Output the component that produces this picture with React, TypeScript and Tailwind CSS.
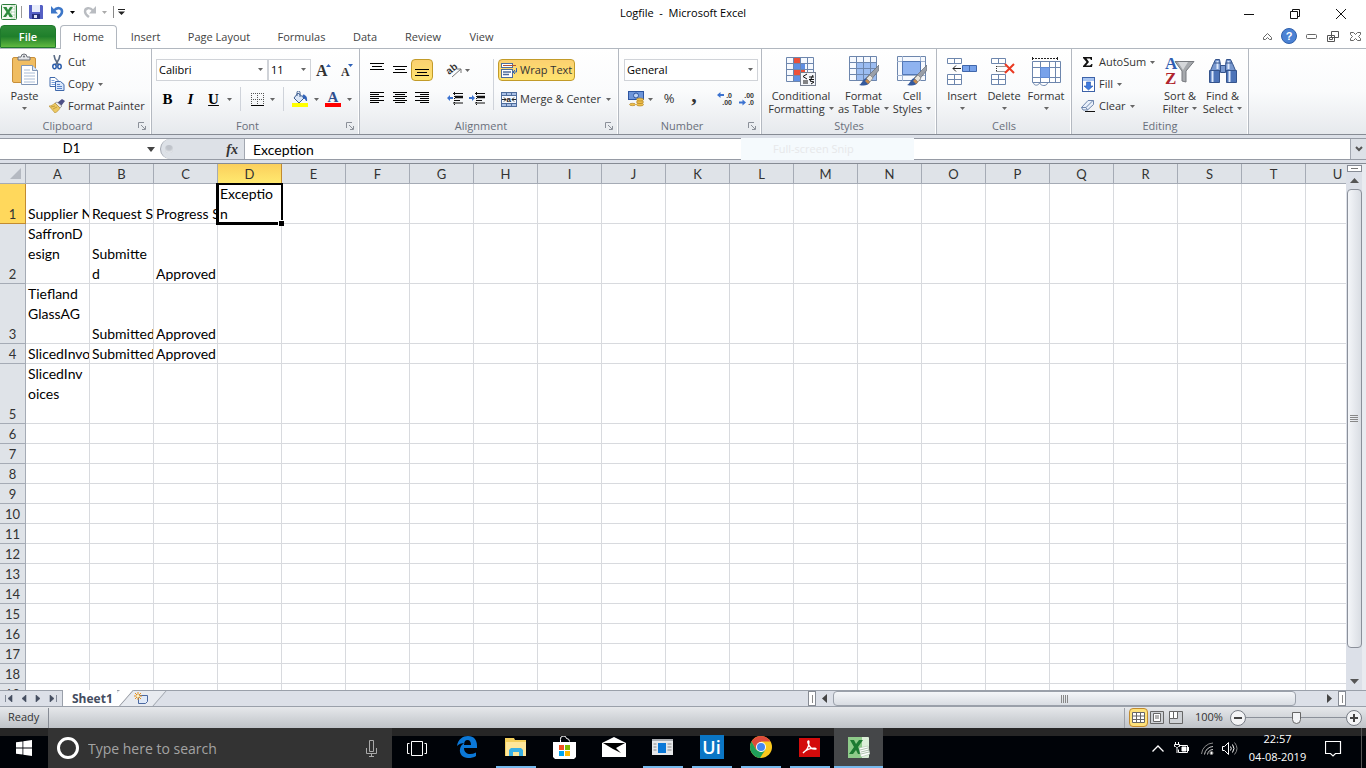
import React, { useState } from 'react';

type IconProps = { className?: string };

const COLUMNS = 'ABCDEFGHIJKLMNOPQRSTU'.split('');

const TABS = [
  { label: 'Insert', width: 'w-[57px]' },
  { label: 'Page Layout', width: 'w-[90px]' },
  { label: 'Formulas', width: 'w-[75px]' },
  { label: 'Data', width: 'w-[52px]' },
  { label: 'Review', width: 'w-[64px]' },
  { label: 'View', width: 'w-[53px]' },
];

// \n marks the places where a wrapped cell breaks
const CELLS: Record<string, string> = {
  A1: 'Supplier N',
  B1: 'Request S',
  C1: 'Progress S',
  D1: 'Exceptio\nn',
  A2: 'SaffronD\nesign\n\u00a0',
  B2: 'Submitte\nd',
  C2: 'Approved',
  A3: 'Tiefland\nGlassAG\n\u00a0',
  B3: 'Submitted',
  C3: 'Approved',
  A4: 'SlicedInvo',
  B4: 'Submitted',
  C4: 'Approved',
  A5: 'SlicedInv\noices\n\u00a0',
};

const rowHeight = (row: number) => {
  switch (row) {
    case 1: return 'h-[39px]';
    case 2:
    case 3:
    case 5: return 'h-[59px]';
    default: return 'h-[19px]';
  }
};

/* ---------- small shared pieces ---------- */

const Arrow = ({ className = 'text-[#666]' }: IconProps) => (
  <svg width="5" height="3" viewBox="0 0 5 3" className={`shrink-0 ${className}`}>
    <path d="M0 0h5L2.5 3z" fill="currentColor" />
  </svg>
);

const Divider = () => <span className="h-6 w-px shrink-0 bg-[#cfd3da]" />;

const Group = ({ title, width, launcher, children }: { title: string; width: string; launcher?: boolean; children: React.ReactNode }) => (
  <section className={`flex shrink-0 flex-col border-r border-[#b4b9c1] shadow-[inset_-1px_0_0_#fff] ${width}`}>
    <div className="flex flex-1">{children}</div>
    <div className="flex h-4 items-center">
      <h2 className="flex-1 text-center text-[11px] leading-4 text-[#696f7b]">{title}</h2>
      {launcher && (
        <button aria-label={`${title} settings`} className="mr-1 flex w-3 justify-end">
          <svg width="9" height="9" viewBox="0 0 9 9" fill="none" stroke="#8b9099">
            <path d="M.5 6V.5H6M3 3l4 4M7.500 4v3.500H4" />
          </svg>
        </button>
      )}
    </div>
  </section>
);

const BigButton = ({ icon, lines, width }: { icon: React.ReactNode; lines: string[]; width: string }) => (
  <button className={`flex shrink-0 flex-col items-center pt-1 text-[11px] leading-[13px] text-[#333] ${width}`}>
    <span className="flex h-9 items-center justify-center">{icon}</span>
    <span>{lines[0]}</span>
    <span className="flex h-[13px] items-center gap-1 whitespace-nowrap">
      {lines[1]}
      <Arrow />
    </span>
  </button>
);

const SmallButton = ({ icon, label, arrow }: { icon: React.ReactNode; label: string; arrow?: boolean }) => (
  <button className="flex h-[22px] items-center gap-[3px] whitespace-nowrap text-[11px] text-[#333]">
    <span className="flex w-4 justify-center">{icon}</span>
    {label}
    {arrow && <Arrow className="ml-px text-[#666]" />}
  </button>
);

const Dropdown = ({ label, value, width }: { label: string; value: string; width: string }) => (
  <div className={`relative flex h-[22px] shrink-0 items-center border border-[#d0d3d8] bg-white ${width}`}>
    <select aria-label={label} defaultValue={value} className="h-4 w-full appearance-none bg-transparent pl-0.5 text-[11px] leading-4 text-black outline-none">
      <option>{value}</option>
    </select>
    <span className="pointer-events-none absolute top-2 right-1"><Arrow /></span>
  </div>
);

/* ---------- icons ---------- */

const ExcelIcon = () => (
  <svg width="16" height="16" viewBox="0 0 16 16">
    <rect x=".5" y=".5" width="15" height="15" rx="1" fill="#f2f8f0" stroke="#2c7d3b" />
    <path d="M10 2h4v12h-4z" fill="#fff" stroke="#8fc08f" strokeWidth=".6" />
    <path d="M10 5h4M10 8h4M10 11h4" stroke="#8fc08f" strokeWidth=".6" />
    <path d="M2 3h3.500L7 6l2-3h3L8.500 8l3.500 5H8.500L7 10l-2 3H2l3.500-5z" fill="#2e8b3d" />
  </svg>
);

const SaveIcon = () => (
  <svg width="14" height="14" viewBox="0 0 14 14">
    <path d="M0 0h13l1 1v13H1l-1-1z" fill="#5560c4" />
    <path d="M3 0h8v7H3z" fill="#e8edfa" />
    <path d="M3 9h8v5H3z" fill="#26307c" />
    <path d="M5 10h3v3H5z" fill="#dfe4f5" />
  </svg>
);

const UndoIcon = () => (
  <svg width="13" height="14" viewBox="0 0 13 14" fill="none">
    <path d="M3 5.500C6 2 11 2.500 11 6.500c0 3-2 4.500-4.500 6" stroke="#3c76c8" strokeWidth="2.600" />
    <path d="M0 1v7.500h7z" fill="#3c76c8" />
  </svg>
);

const RedoIcon = () => (
  <svg width="13" height="14" viewBox="0 0 13 14" fill="none">
    <path d="M10 5.500C7 2 2 2.500 2 6.500c0 3 2 4 4 5.500" stroke="#b9bcc1" strokeWidth="2.400" />
    <path d="M13 1v7.500H6z" fill="#b9bcc1" />
  </svg>
);

const PasteIcon = () => (
  <svg width="28" height="32" viewBox="0 0 28 32">
    <rect x="1.500" y="4.500" width="23" height="25" rx="1.500" fill="#f0bd62" stroke="#c88f3a" />
    <path d="M7 7V4h3a3 3 0 0 1 6 0h3v3z" fill="#e4e6ea" stroke="#6d7178" />
    <circle cx="13" cy="3.500" r="1" fill="#6d7178" />
    <path d="M10.500 12.500h11l5 5v14h-16z" fill="#fff" stroke="#7f95b5" />
    <path d="M21.500 12.500v5h5" fill="#dbe6f5" stroke="#7f95b5" />
    <path d="M13 17h6M13 20h11M13 23h11M13 26h11M13 29h11" stroke="#a9bcd6" />
  </svg>
);

const CutIcon = () => (
  <svg width="10" height="15" viewBox="0 0 10 15" fill="none">
    <path d="M2 0l1 4 3.500 6M8 0L7 4 3.500 10" stroke="#5a6b85" strokeWidth="1.600" />
    <ellipse cx="2.500" cy="11.500" rx="1.700" ry="2.300" stroke="#2a5cab" strokeWidth="1.500" />
    <ellipse cx="7.500" cy="11.500" rx="1.700" ry="2.300" stroke="#2a5cab" strokeWidth="1.500" />
  </svg>
);

const CopyIcon = () => (
  <svg width="16" height="14" viewBox="0 0 16 14" stroke="#3f68ab">
    <path d="M1 .5h5l3 3v6H1z" fill="#fff" />
    <path d="M2.500 3.500h3M2.500 5.500h4M2.500 7.500h4" stroke="#7aa0dc" />
    <path d="M6.500 4.500h5l3.500 3v6H6.500z" fill="#dbe8fb" />
    <path d="M8 7.500h3M8 9.500h5M8 11.500h5" stroke="#5b86cc" />
  </svg>
);

const PainterIcon = () => (
  <svg width="16" height="14" viewBox="0 0 16 14">
    <path d="M13 0l3 2-4 5-4-3z" fill="#4c4f86" />
    <path d="M8 3l5 4-2 2-5-5z" fill="#e9e9ef" stroke="#777" strokeWidth=".6" />
    <path d="M6 4l5 5c-1 2-3 4-5 5L0 7c2 0 4-1 6-3z" fill="#ecc964" stroke="#b68b2c" strokeWidth=".6" />
    <path d="M2 8l4-1M4 10l4-2" stroke="#a77d22" strokeWidth=".6" />
  </svg>
);

const LINE_SETS = {
  top: 'M0 .5h14M2 3.500h10M0 6.500h14',
  middle: 'M0 3.500h14M2 6.500h10M0 9.500h14',
  bottom: 'M0 6.500h14M2 9.500h10M0 12.500h14',
  left: 'M0 .5h14M0 2.500h9M0 4.500h14M0 6.500h9M0 8.500h14M0 10.500h9',
  center: 'M0 .5h14M2 2.500h10M0 4.500h14M2 6.500h10M0 8.500h14M2 10.500h10',
  right: 'M0 .5h14M5 2.500h9M0 4.500h14M5 6.500h9M0 8.500h14M5 10.500h9',
};

const Lines = ({ kind }: { kind: keyof typeof LINE_SETS }) => (
  <svg width="14" height="14" viewBox="0 0 14 14" stroke="#000">
    <path d={LINE_SETS[kind]} />
  </svg>
);

const IndentIcon = ({ out }: { out?: boolean }) => (
  <svg width="16" height="14" viewBox="0 0 16 14" fill="none">
    <path d="M6 1.500h10M8 8.500h5M6 11h10" stroke="#111" />
    <path d="M8 5h8" stroke="#111" strokeWidth="2.500" />
    <path d="M7.500 0v14" stroke="#111" strokeDasharray="1 1" />
    <path d={out ? 'M0 6l3-3v2h3v2H3v2z' : 'M6 6L3 3v2H0v2h3v2z'} fill="#3b72d0" />
  </svg>
);

const OrientationIcon = () => (
  <svg width="16" height="14" viewBox="0 0 16 14" className="overflow-visible">
    <text x="0" y="10" fontSize="10" fontWeight="bold" fontFamily="Liberation Sans, sans-serif" fill="#333" transform="rotate(-38 4 8)">ab</text>
    <path d="M5 14l9-8M14 10V6h-4" fill="none" stroke="#777" />
  </svg>
);

const WrapIcon = () => (
  <svg width="16" height="15" viewBox="0 0 16 15" fill="none">
    <rect x=".5" y=".5" width="11" height="4" fill="#fff" stroke="#4d6c9c" />
    <path d="M2 2.500h13" stroke="#b4532e" />
    <rect x=".5" y="6.500" width="11" height="8" fill="#fff" stroke="#4d6c9c" />
    <path d="M2 9h8M2 11.500h6" stroke="#4d6c9c" strokeWidth="1.400" />
    <path d="M15.500 5v4h-3M14 7l-2 2 2 2" stroke="#2f62b5" />
  </svg>
);

const MergeIcon = () => (
  <svg width="16" height="15" viewBox="0 0 16 15">
    <rect x=".5" y=".5" width="15" height="14" fill="#a9c0e6" stroke="#4d6c9c" />
    <path d="M0 3.500h16M0 11.500h16M5.500 0v3.500M10.500 0v3.500M5.500 11.500V15M10.500 11.500V15" stroke="#4d6c9c" />
    <path d="M1 4h14v7H1z" fill="#f5f9ff" />
    <path d="M1 7.500h4M11 7.500h4M3 5.500l2 2-2 2M13 5.500l-2 2 2 2" fill="none" stroke="#222" />
    <text x="5.500" y="10" fontSize="8" fontWeight="bold" fontFamily="Liberation Sans, sans-serif" fill="#222">a</text>
  </svg>
);

const BorderIcon = () => (
  <svg width="13" height="13" viewBox="0 0 13 13" stroke="#555">
    <path d="M.5 0v12M6.500 0v12M12.500 0v12M0 .5h13M0 6.500h13" strokeDasharray="1 1" />
    <path d="M0 12.500h13" stroke="#000" />
  </svg>
);

const FillColorIcon = () => (
  <svg width="16" height="16" viewBox="0 0 16 16">
    <path d="M6 2l6 5-5 5-5-5z" fill="#dce7f7" stroke="#3f5f90" />
    <path d="M5 5V1.500a1.500 1.500 0 0 1 3 0V6" fill="none" stroke="#3f5f90" />
    <path d="M11 4c3 0 4 3 3.500 6-1-2-2-3-3-3z" fill="#2d60b8" stroke="#2d60b8" />
    <path d="M0 12h16v4H0z" fill="#ff0" />
  </svg>
);

const FontColorIcon = () => (
  <svg width="16" height="16" viewBox="0 0 16 16" className="overflow-visible">
    <text x="8" y="11" textAnchor="middle" fontSize="15" fontWeight="bold" fontFamily="Liberation Serif, serif" fill="#2f4f8f">A</text>
    <path d="M0 12h16v4H0z" fill="#f00" />
  </svg>
);

const SizeIcon = ({ small }: { small?: boolean }) => (
  <svg width="15" height="15" viewBox="0 0 15 15" className="overflow-visible">
    <text x={small ? 2 : 0} y="13" fontSize={small ? 12 : 16} fontWeight="bold" fontFamily="Liberation Serif, serif" fill="#333">A</text>
    <path d={small ? 'M9 1h5l-2.500 3z' : 'M10 4h5l-2.500-3z'} fill="#2d60b8" />
  </svg>
);

const CurrencyIcon = () => (
  <svg width="16" height="16" viewBox="0 0 16 16">
    <rect x=".5" y=".5" width="15" height="8" fill="#6d95d9" stroke="#2d55a0" />
    <circle cx="8" cy="4.500" r="2.500" fill="#bcd2f5" stroke="#2d55a0" />
    <g fill="#f0c14b" stroke="#a8781c" strokeWidth=".6">
      <ellipse cx="12" cy="13.500" rx="3.500" ry="1.500" />
      <ellipse cx="12" cy="11" rx="3.500" ry="1.500" />
      <ellipse cx="12" cy="8.500" rx="3.500" ry="1.500" />
      <ellipse cx="4.500" cy="13.500" rx="3" ry="1.200" />
    </g>
  </svg>
);

const DecimalIcon = ({ less }: { less?: boolean }) => (
  <svg width="16" height="14" viewBox="0 0 16 14" className="overflow-visible" fontSize="7" fontWeight="bold" fontFamily="Liberation Sans, sans-serif">
    <text x="15" y="6" textAnchor="end" fill="#333">{less ? '.00' : '.0'}</text>
    <text x="15" y="13" textAnchor="end" fill="#333">{less ? '.0' : '.00'}</text>
    <path d={less ? 'M7 10.500L3.500 7.500v2H0v2h3.500v2z' : 'M0 3l3.500-3v2H7v2H3.500v2z'} fill="#3b72d0" />
  </svg>
);

const Brush = () => (
  <g>
    <path d="M30 9v5l-9 11-4-3z" fill="#9a9fa8" stroke="#666b74" strokeWidth=".7" />
    <path d="M21 19l3 3-3 4-4-3z" fill="#e9e4da" stroke="#777" strokeWidth=".6" />
    <path d="M17 22l4 4c-2 4-6 4-11 3 3-1 3-5 7-7z" fill="#34599c" />
    <path d="M18 23l3 3-2 2-3-3z" fill="#c78a4a" />
  </g>
);

const GridLines = () => (
  <path d="M.5 .5h27v24H.5zM.5 6.500h27M.5 12.500h27M.5 18.500h27M7.500 .5v24M14.500 .5v24M21.500 .5v24" fill="none" stroke="#6d86ad" />
);

const ConditionalIcon = () => (
  <svg width="30" height="29" viewBox="0 0 30 29">
    <path d="M0 0h28v25H0z" fill="#f6f9fe" />
    <path d="M7 0h7v7H7zM7 13h12v6H7z" fill="#ec5039" />
    <path d="M7 7h12v6H7zM7 19h7v6H7z" fill="#5f8fe3" />
    <GridLines />
    <rect x="14.500" y="15.500" width="15" height="13" fill="#f4f6fa" stroke="#777f8e" />
    <path d="M21 17l-4 2.500 4 2.500M17 24h5M17 26h5M23 20h5M23 22.500h5M27 18l-3 6M24 24l4 1-3 2" fill="none" stroke="#111" />
  </svg>
);

const TableIcon = () => (
  <svg width="30" height="30" viewBox="0 0 30 30">
    <path d="M0 0h28v25H0z" fill="#f6f9fe" />
    <path d="M7 6h21v19H7z" fill="#9bbcf1" />
    <GridLines />
    <Brush />
  </svg>
);

const CellStyleIcon = () => (
  <svg width="30" height="30" viewBox="0 0 30 30">
    <path d="M.5 .5h28v24H.5z" fill="#f6f9fe" stroke="#6d86ad" />
    <path d="M0 5.500h28M0 19.500h28M5.500 0v25M23.500 0v25" stroke="#9fb2cf" />
    <path d="M5.500 5.500h18v13h-18z" fill="#8fb3f0" stroke="#5277b5" />
    <Brush />
  </svg>
);

const InsertIcon = () => (
  <svg width="30" height="27" viewBox="0 0 30 27" fill="#fff" stroke="#6d86ad">
    <path d="M.5 .5h14v5H.5zM7.500 .5v5M.5 16.500h14v10H.5zM7.500 16.500v10M.5 21.500h14" />
    <path d="M15.500 7.500h14v6h-14zM22.500 7.500v6" fill="#78a2ea" stroke="#4067ab" />
    <path d="M6 10.500h8M9 7.500l-3 3 3 3" fill="none" stroke="#222" />
  </svg>
);

const DeleteIcon = () => (
  <svg width="26" height="27" viewBox="0 0 26 27" fill="#fff" stroke="#6d86ad">
    <path d="M.5 .5h14v5H.5zM7.500 .5v5M.5 16.500h14v10H.5zM7.500 16.500v10M.5 21.500h14" />
    <path d="M5.500 8.500h9M5.500 13.500h9M5.500 8v6" stroke="#333" strokeDasharray="1 1" />
    <path d="M14 6l9 9M23 6l-9 9" stroke="#ea3a22" strokeWidth="2" />
  </svg>
);

const FormatIcon = () => (
  <svg width="31" height="29" viewBox="0 0 31 29" fill="#fff" stroke="#6d86ad">
    <path d="M1 1.500h26" stroke="#222" strokeDasharray="2 1" />
    <path d="M1.500 0v3M26.500 0v3" stroke="#222" />
    <path d="M2.500 25.500c0 4 6 3 6 0 1 4 8 4 8 0" />
    <path d="M1.500 4.500h28v21h-28zM1.500 10.500h28M1.500 20.500h28M9.500 4.500v21M18.500 4.500v21M24.500 4.500v21" />
    <path d="M9.500 10.500h9v10h-9z" fill="#78a2ea" stroke="#5f8ad4" />
  </svg>
);

const SigmaIcon = () => (
  <svg width="10" height="10" viewBox="0 0 10 10">
    <path d="M0 0h9v3H8L7 1.500H3.500L6 5 3 8.500h4L8.500 7h1L9 10H0V9l3.500-4L0 1z" fill="#111" />
  </svg>
);

const FillIcon = () => (
  <svg width="13" height="15" viewBox="0 0 13 15">
    <rect x=".5" y=".5" width="12" height="14" fill="#fff" stroke="#3d62a8" />
    <path d="M1 1h11v3H1z" fill="#a8c5f2" />
    <path d="M4.500 5h4v4H11l-4.500 4L2 9h2.500z" fill="#3f7be0" stroke="#2456ad" strokeWidth=".6" />
  </svg>
);

const EraserIcon = () => (
  <svg width="14" height="12" viewBox="0 0 14 12">
    <path d="M7 .5h5.500v4L6.500 10H2L.5 7.500z" fill="#e9f0fa" stroke="#6f87ad" />
    <path d="M.5 7.500H5l7-7M5 7.500L6.500 10" fill="none" stroke="#6f87ad" />
    <path d="M4 11.500h10" stroke="#111" />
  </svg>
);

const SortIcon = () => (
  <svg width="30" height="29" viewBox="0 0 30 29" className="overflow-visible" fontSize="17" fontWeight="bold" fontFamily="Liberation Serif, serif">
    <path d="M10 4.500h19L21 14v11l-4-1V14z" fill="#a6a9ad" stroke="#76797e" />
    <path d="M13 5h10l-5 8z" fill="#d5d7da" />
    <text x="0" y="12" fill="#2f5db0">A</text>
    <text x="0" y="27" fill="#b0252e">Z</text>
  </svg>
);

const BinocularsIcon = () => (
  <svg width="28" height="26" viewBox="0 0 28 26" fill="#7898cf" stroke="#35548c">
    <path d="M6.500 1.500h4l1 5 1 6h-11l3-7z" />
    <path d="M17.500 1.500h4l2 4 3 7h-11l1-6z" />
    <path d="M11.500 7.500h5v7h-5z" />
    <path d="M.5 12.500h10v12H.5zM17.500 12.500h10v12h-10z" fill="#4d74b8" />
    <path d="M3.500 13v11M20.500 13v11M8.500 3v8M19.500 3v8" stroke="#dce8fb" strokeWidth="2" />
    <path d="M5 5h6M17 5h6" />
  </svg>
);

const HelpIcon = () => (
  <svg width="16" height="16" viewBox="0 0 16 16">
    <circle cx="8" cy="8" r="7.500" fill="#4b82d4" stroke="#2f5faa" />
    <text x="8" y="12" textAnchor="middle" fontSize="11" fontWeight="bold" fontFamily="Liberation Sans, sans-serif" fill="#fff">?</text>
  </svg>
);

/* ---------- window ---------- */

const TitleBar = () => (
  <header className="grid h-6 shrink-0 grid-cols-[1fr_auto_1fr] items-center">
    <div className="flex items-center pl-px">
      <ExcelIcon />
      <span className="mx-1 h-3 w-px bg-[#999]" />
      <div className="flex items-center pl-[3px]">
        <button aria-label="Save" className="mr-2"><SaveIcon /></button>
        <button aria-label="Undo"><UndoIcon /></button>
        <button aria-label="Undo history" className="mx-1.5"><Arrow className="text-black" /></button>
        <button aria-label="Redo" className="ml-0.5"><RedoIcon /></button>
        <button aria-label="Redo history" className="mx-1.5"><Arrow className="text-[#aaa]" /></button>
        <span className="h-3 w-px bg-[#888]" />
        <button aria-label="Customize toolbar" className="ml-1">
          <svg width="7" height="6" viewBox="0 0 7 6"><path d="M0 0h7v1H0zM0 2.500h7L3.500 6z" fill="#222" /></svg>
        </button>
      </div>
    </div>
    <h1 className="pt-0.5 text-[11px] whitespace-pre text-black">Logfile  -  Microsoft Excel</h1>
    <div className="flex items-center justify-end pt-1 pr-0.5">
      <button aria-label="Minimize" className="flex w-[46px] justify-center">
        <svg width="10" height="10" stroke="#111"><path d="M0 5.500h10" /></svg>
      </button>
      <button aria-label="Restore" className="flex w-[46px] justify-center">
        <svg width="10" height="10" fill="none" stroke="#111"><path d="M.5 2.500h7v7h-7zM2.500 2.500v-2h7v7h-2" /></svg>
      </button>
      <button aria-label="Close" className="flex w-[46px] justify-center">
        <svg width="10" height="10" stroke="#111"><path d="M0 0l10 10M10 0L0 10" /></svg>
      </button>
    </div>
  </header>
);

const TabRow = () => (
  <nav className="flex h-[25px] shrink-0 items-stretch border-b border-[#b1b7bf] text-[11px] text-[#444]">
    <button className="mt-px w-14 rounded-t-sm border border-[#1f7a2c] bg-linear-to-b from-[#2e8b38] via-[#1f7f2b] to-[#5fb93f] pt-px font-semibold text-white">File</button>
    <button className="relative mt-px -mb-px ml-1 w-[57px] rounded-t-sm border border-b-0 border-[#b1b7bf] bg-white">Home</button>
    {TABS.map(t => (
      <button key={t.label} className={`pt-[3px] ${t.width}`}>{t.label}</button>
    ))}
    <div className="ml-auto flex items-center">
      <button aria-label="Collapse ribbon" className="flex w-[22px] justify-center">
        <svg width="9" height="7" fill="#fff" stroke="#666"><path d="M.5 4.500l4-4 4 4v2h-2l-2-2-2 2h-2z" /></svg>
      </button>
      <button aria-label="Help" className="flex w-[22px] justify-center"><HelpIcon /></button>
      <button aria-label="Minimize workbook" className="flex w-[22px] justify-center">
        <svg width="11" height="5" fill="#fff" stroke="#666"><rect x=".5" y=".5" width="10" height="4" rx="1" /></svg>
      </button>
      <button aria-label="Restore workbook" className="flex w-[22px] justify-center">
        <svg width="12" height="11" fill="#fff" stroke="#555"><path d="M4.500 .5h7v6h-7zM.5 4.500h7v6h-7zM2.500 6.500h3v2h-3z" /></svg>
      </button>
      <button aria-label="Close workbook" className="flex w-[22px] justify-center">
        <svg width="11" height="9" fill="#fff" stroke="#666"><path d="M.5 .5h3l2 2 2-2h3v2l-2 2 2 2v2h-3l-2-2-2 2h-3v-2l2-2-2-2z" /></svg>
      </button>
    </div>
  </nav>
);

const Ribbon = () => (
  <div className="flex h-[86px] shrink-0 overflow-hidden border-b border-[#868b94] bg-linear-to-b from-white via-[#fafbfc] to-[#e6e9ed]">
    <Group title="Clipboard" width="w-[152px]" launcher>
      <button className="flex w-[49px] flex-col items-center pt-1 text-[11px] leading-[13px] text-[#333]">
        <span className="flex h-9 items-start"><PasteIcon /></span>
        Paste
        <span className="flex h-[13px] items-center"><Arrow /></span>
      </button>
      <div className="flex flex-col pt-0.5">
        <SmallButton icon={<CutIcon />} label="Cut" />
        <SmallButton icon={<CopyIcon />} label="Copy" arrow />
        <SmallButton icon={<PainterIcon />} label="Format Painter" />
      </div>
    </Group>

    <Group title="Font" width="w-[208px]" launcher>
      <div className="flex flex-col gap-[7px] pt-2.5 pl-1">
        <div className="flex items-center">
          <Dropdown label="Font name" value="Calibri" width="w-28" />
          <Dropdown label="Font size" value="11" width="w-[43px]" />
          <button aria-label="Grow font" className="ml-[5px]"><SizeIcon /></button>
          <button aria-label="Shrink font" className="ml-2"><SizeIcon small /></button>
        </div>
        <div className="flex h-[22px] items-center font-['Liberation_Serif',serif] text-[15px] text-black">
          <button className="w-[23px] font-bold">B</button>
          <button className="w-[23px] font-bold italic">I</button>
          <button className="w-[23px] font-bold underline">U</button>
          <button aria-label="Underline style" className="mr-2 ml-0.5"><Arrow /></button>
          <Divider />
          <button aria-label="Borders" className="ml-2.5"><BorderIcon /></button>
          <button aria-label="Border style" className="mr-2 ml-1.5"><Arrow /></button>
          <Divider />
          <button aria-label="Fill color" className="ml-2"><FillColorIcon /></button>
          <button aria-label="Fill color list" className="mx-1.5"><Arrow /></button>
          <button aria-label="Font color"><FontColorIcon /></button>
          <button aria-label="Font color list" className="ml-1.5"><Arrow /></button>
        </div>
      </div>
    </Group>

    <Group title="Alignment" width="w-[259px]" launcher>
      <div className="flex flex-col gap-[7px] pt-2.5 pl-[5px]">
        <div className="flex h-[22px] items-center">
          <button aria-label="Top align" className="flex w-[23px] justify-center"><Lines kind="top" /></button>
          <button aria-label="Middle align" className="flex w-[23px] justify-center"><Lines kind="middle" /></button>
          <button aria-label="Bottom align" className="flex h-[22px] w-[22px] items-center justify-center rounded-sm border border-[#c29b29] bg-linear-to-b from-[#fbd070] to-[#fee46f]"><Lines kind="bottom" /></button>
          <span className="ml-1"><Divider /></span>
          <button aria-label="Orientation" className="ml-2.5"><OrientationIcon /></button>
          <button aria-label="Orientation list" className="ml-0.5"><Arrow /></button>
        </div>
        <div className="flex h-[22px] items-center">
          <button aria-label="Align left" className="flex w-[23px] justify-center"><Lines kind="left" /></button>
          <button aria-label="Center" className="flex w-[23px] justify-center"><Lines kind="center" /></button>
          <button aria-label="Align right" className="flex w-[22px] justify-center"><Lines kind="right" /></button>
          <span className="ml-1"><Divider /></span>
          <button aria-label="Decrease indent" className="ml-2.5"><IndentIcon out /></button>
          <button aria-label="Increase indent" className="ml-1.5"><IndentIcon /></button>
        </div>
      </div>
      <span className="mr-1 ml-2 mt-2.5 h-[51px] w-px bg-[#cfd3da]" />
      <div className="flex flex-col items-start gap-[7px] pt-2.5">
        <button className="flex h-[22px] items-center gap-[3px] rounded-sm border border-[#c29b29] bg-linear-to-b from-[#fbd070] to-[#fee46f] px-0.5 text-[11px] whitespace-nowrap text-[#333]">
          <WrapIcon />Wrap Text
        </button>
        <button className="flex h-[22px] items-center gap-[3px] pl-[3px] text-[11px] whitespace-nowrap text-[#333]">
          <MergeIcon />Merge &amp; Center
          <Arrow className="ml-0.5 text-[#666]" />
        </button>
      </div>
    </Group>

    <Group title="Number" width="w-[143px]" launcher>
      <div className="flex flex-col gap-[7px] pt-2.5 pl-[5px]">
        <Dropdown label="Number format" value="General" width="w-[134px]" />
        <div className="flex h-[22px] items-center text-[13px] text-[#333]">
          <button aria-label="Accounting format" className="ml-1"><CurrencyIcon /></button>
          <button aria-label="Accounting list" className="ml-1"><Arrow /></button>
          <button className="ml-2 w-4">%</button>
          <button className="ml-2.5 w-3.5 pb-2 font-['Liberation_Serif',serif] text-[22px] leading-5 font-bold">,</button>
          <span className="ml-2"><Divider /></span>
          <button aria-label="Increase decimal" className="ml-2"><DecimalIcon /></button>
          <button aria-label="Decrease decimal" className="ml-1.5"><DecimalIcon less /></button>
        </div>
      </div>
    </Group>

    <Group title="Styles" width="w-[175px]">
      <div className="flex gap-1 pl-1.5">
        <BigButton icon={<ConditionalIcon />} lines={['Conditional', 'Formatting']} width="w-[66px]" />
        <BigButton icon={<TableIcon />} lines={['Format', 'as Table']} width="w-[51px]" />
        <BigButton icon={<CellStyleIcon />} lines={['Cell', 'Styles']} width="w-[38px]" />
      </div>
    </Group>

    <Group title="Cells" width="w-[135px]">
      <div className="flex gap-0.5 pl-[5px]">
        <BigButton icon={<InsertIcon />} lines={['Insert', '']} width="w-10" />
        <BigButton icon={<DeleteIcon />} lines={['Delete', '']} width="w-10" />
        <BigButton icon={<FormatIcon />} lines={['Format', '']} width="w-10" />
      </div>
    </Group>

    <Group title="Editing" width="w-[177px]">
      <div className="flex w-[86px] flex-col pt-0.5 pl-2">
        <SmallButton icon={<SigmaIcon />} label="AutoSum" arrow />
        <SmallButton icon={<FillIcon />} label="Fill" arrow />
        <SmallButton icon={<EraserIcon />} label="Clear" arrow />
      </div>
      <BigButton icon={<SortIcon />} lines={['Sort &', 'Filter']} width="w-11" />
      <BigButton icon={<BinocularsIcon />} lines={['Find &', 'Select']} width="w-[41px]" />
    </Group>
  </div>
);

const FormulaBar = () => {
  const [formula, setFormula] = useState('Exception');

  return (
    <div className="my-[3px] flex h-[22px] shrink-0 border-y border-[#969ba5] bg-white font-[Lato,sans-serif] text-[14px] text-black">
      <input aria-label="Name box" defaultValue="D1" className="w-[143px] text-center text-[13px] outline-none" />
      <button aria-label="Name list" className="w-[15px]">
        <svg width="8" height="5" viewBox="0 0 8 5" className="mx-auto"><path d="M0 0h8L4 5z" fill="#444" /></svg>
      </button>
      <div className="ml-0.5 flex w-[85px] items-center justify-between rounded-l-full border-r border-l border-[#a2a7b0] bg-[#dde1e7] pr-1.5 pl-1">
        <span className="size-2 rounded-full bg-[#bfc3ca] shadow-[inset_0_-2px_2px_#e4e7eb]" />
        <button className="font-['Liberation_Serif',serif] font-bold text-[#333] italic">fx</button>
      </div>
      <div className="relative flex-1">
        <input aria-label="Formula" value={formula} onChange={e => setFormula(e.target.value)} className="h-full w-full pl-2 outline-none" />
        <span className="pointer-events-none absolute -top-px left-[496px] h-[22px] w-[173px] bg-[#f5fafd] pl-8 font-['Open_Sans',sans-serif] text-[11px] leading-[22px] text-[#e7e8ea]">Full-screen Snip</span>
      </div>
      <button aria-label="Expand formula bar" className="flex w-4 items-center justify-center border-l border-[#a2a7b0] bg-[#dde1e7]">
        <svg width="8" height="6" fill="none" stroke="#555" strokeWidth="2"><path d="M1 1l3 3 3-3" /></svg>
      </button>
    </div>
  );
};

const Sheet = () => (
  <div className="min-w-0 flex-1 overflow-hidden bg-white">
    <table className="w-max table-fixed border-separate border-spacing-0 font-[Lato,sans-serif] text-[14px] leading-5 text-black">
      <thead>
        <tr className="text-[13px]">
          <th className="border-r border-b border-[#a5abb5] bg-[#dfe3e8] p-0">
            <div className="flex h-[19px] w-[25px] items-end justify-end p-1">
              <svg width="11" height="11"><path d="M11 0v11H0z" fill="#b4b9c1" /></svg>
            </div>
          </th>
          {COLUMNS.map(c => (
            <th
              key={c}
              scope="col"
              className={`border-r border-b p-0 font-normal ${c === 'D' ? 'border-[#c28b30] bg-linear-to-b from-[#fbcf5c] to-[#ffe96f] text-[#333]' : 'border-[#a5abb5] bg-[#dfe3e8] text-[#333]'}`}
            >
              <div className="h-[19px] w-[63px]">{c}</div>
            </th>
          ))}
        </tr>
      </thead>
      <tbody>
        {Array.from({ length: 19 }, (_, i) => i + 1).map(row => (
          <tr key={row}>
            <th scope="row" className={`border-r border-b p-0 text-[13px] font-normal text-[#333] ${row === 1 ? 'border-[#c28b30] bg-[#ffd85c]' : 'border-[#a5abb5] bg-[#dfe3e8]'}`}>
              <div className={`flex w-[25px] items-end justify-center ${rowHeight(row)}`}>
                <span className="-mb-px">{row}</span>
              </div>
            </th>
            {COLUMNS.map(c => (
              <td key={c} className="relative border-r border-b border-[#d8dade] p-0">
                <div className={`flex w-[63px] items-end overflow-hidden pl-0.5 whitespace-pre ${rowHeight(row)}`}>
                  <span className="-mb-px">{CELLS[c + row]}</span>
                </div>
                {c === 'D' && row === 1 && (
                  <span className="absolute -top-px -right-0.5 -bottom-0.5 -left-0.5 z-10 border-2 border-b-[3px] border-l-[3px] border-black">
                    <span className="absolute -right-[3px] -bottom-1 size-[6px] border-t border-l border-white bg-black" />
                  </span>
                )}
              </td>
            ))}
          </tr>
        ))}
      </tbody>
    </table>
  </div>
);

const VerticalScroll = () => (
  <div className="flex w-5 shrink-0 flex-col items-center border-r-4 border-[#e9ebf0] bg-[#dce0e8]">
    <span className="mt-px flex h-[7px] w-[15px] items-center border border-[#868b94] bg-white px-[3px]"><span className="h-px w-full bg-[#777]" /></span>
    <button aria-label="Scroll up" className="flex h-[17px] items-center">
      <svg width="9" height="5"><path d="M0 5l4.500-5L9 5z" fill="#555" /></svg>
    </button>
    <div className="flex w-[15px] flex-1 flex-col items-center justify-center gap-px rounded-sm border border-[#8b909a] bg-linear-to-r from-[#f4f6f9] to-[#d9dde3]">
      <span className="h-px w-2 bg-[#888]" />
      <span className="h-px w-2 bg-[#888]" />
      <span className="h-px w-2 bg-[#888]" />
      <span className="h-px w-2 bg-[#888]" />
    </div>
    <button aria-label="Scroll down" className="mt-[25px] flex h-[17px] items-center">
      <svg width="9" height="5"><path d="M0 0l4.500 5L9 0z" fill="#555" /></svg>
    </button>
  </div>
);

const SheetTabs = () => (
  <div className="flex h-[17px] shrink-0 items-stretch border-y border-[#9aa0aa] bg-[#dce0e8]">
    <div className="flex w-[63px] items-center justify-around border-r border-[#9aa0aa] px-0.5">
      {['M.5 0v7M7 0v7L3 3.500z', 'M6 0v7L2 3.500z', 'M2 0v7l4-3.500z', 'M7.500 0v7M1 0v7l4-3.500z'].map((d, i) => (
        <button key={d} aria-label={['First sheet', 'Previous sheet', 'Next sheet', 'Last sheet'][i]}>
          <svg width="8" height="7" fill="#444d60" stroke="#444d60" strokeWidth=".6"><path d={d} /></svg>
        </button>
      ))}
    </div>
    <button className="relative -mt-px w-[54px] bg-white pt-px pl-[9px] text-left text-[12px] leading-4 font-bold text-[#444d60] after:absolute after:inset-y-0 after:-right-[10px] after:w-3.5 after:-skew-x-[41deg] after:border-r after:border-[#868b94] after:bg-white">
      <span className="relative z-10">Sheet1</span>
    </button>
    <button aria-label="Insert worksheet" className="ml-[10px] flex w-[33px] -skew-x-[41deg] items-center justify-center border-r border-[#9aa0aa] bg-[#e8ebf0]">
      <svg width="15" height="13" viewBox="0 0 15 13" className="-ml-1 skew-x-[41deg]">
        <path d="M4.500 3.500h9v6l-2 2h-7z" fill="#dfe9f8" stroke="#4a68a0" />
        <path d="M4 0v8M0 4h8M1 1l6 6M7 1L1 7" stroke="#e58f1a" />
        <circle cx="4" cy="4" r="1.500" fill="#fff3c4" />
      </svg>
    </button>
    <div className="ml-auto flex w-[558px] items-center">
      <span className="flex h-[15px] w-2 items-center justify-center border border-[#868b94] bg-white"><span className="h-2 w-px bg-[#888]" /></span>
      <button aria-label="Scroll left" className="flex w-[17px] justify-center">
        <svg width="5" height="9"><path d="M5 0v9L0 4.500z" fill="#444" /></svg>
      </button>
      <div className="flex h-[15px] flex-1 items-center justify-center gap-px rounded-sm border border-[#9aa0aa] bg-linear-to-b from-[#f4f6f9] to-[#d9dde3]">
        <span className="h-2 w-px bg-[#888]" />
        <span className="h-2 w-px bg-[#888]" />
        <span className="h-2 w-px bg-[#888]" />
        <span className="h-2 w-px bg-[#888]" />
      </div>
      <button aria-label="Scroll right" className="ml-[25px] flex w-[17px] justify-center">
        <svg width="5" height="9"><path d="M0 0v9l5-4.500z" fill="#444" /></svg>
      </button>
      <span className="mr-5 flex h-[15px] w-2 items-center justify-center border border-[#868b94] bg-white"><span className="h-2 w-px bg-[#888]" /></span>
    </div>
  </div>
);

const ZoomButton = ({ label, d }: { label: string; d: string }) => (
  <button aria-label={label}>
    <svg width="16" height="16" viewBox="0 0 16 16">
      <circle cx="8" cy="8" r="7.500" fill="#f3f4f6" stroke="#777c85" />
      <path d={d} stroke="#444" strokeWidth="2" />
    </svg>
  </button>
);

const StatusBar = () => {
  const [zoom, setZoom] = useState(50);

  return (
    <footer className="flex h-[21px] shrink-0 items-center bg-linear-to-b from-[#e6e8eb] to-[#bfc3c8] text-[11px] text-[#333]">
      <span className="flex h-5 w-[49px] items-center border-r border-[#868b94] pl-2">Ready</span>
      <span className="ml-auto h-5 w-px bg-[#9da1a8]" />
      <button aria-label="Normal view" className="ml-1 flex h-[19px] w-[19px] items-center justify-center rounded-sm border border-[#c28b30] bg-[#fee27a]">
        <svg width="13" height="11" fill="#fff" stroke="#666"><path d="M.5 .5h12v10H.5zM.5 4h12M.5 7.500h12M4.500 .5v10M8.500 .5v10" /></svg>
      </button>
      <button aria-label="Page layout view" className="ml-0.5">
        <svg width="14" height="13" fill="#cfd2d6" stroke="#666"><path d="M.5 .5h13v12H.5z" /><path d="M3.500 2.500h7v8h-7zM5 5h4M5 7h4" fill="#fff" /></svg>
      </button>
      <button aria-label="Page break preview" className="ml-[5px]">
        <svg width="14" height="13" fill="#cfd2d6" stroke="#666"><path d="M.5 .5h13v12H.5z" /><path d="M.5 .5h4v7h-4zM4.500 .5h4v7h-4z" fill="#fff" /></svg>
      </button>
      <span className="ml-3 w-[35px]">100%</span>
      <ZoomButton label="Zoom out" d="M4 8h8" />
      <input
        type="range"
        aria-label="Zoom"
        value={zoom}
        onChange={e => setZoom(Number(e.target.value))}
        className="h-3 w-[100px] appearance-none bg-[linear-gradient(#8b9099,#8b9099)] bg-[length:100%_1px] bg-center bg-no-repeat [&::-webkit-slider-thumb]:h-3 [&::-webkit-slider-thumb]:w-[9px] [&::-webkit-slider-thumb]:appearance-none [&::-webkit-slider-thumb]:rounded-b-full [&::-webkit-slider-thumb]:border [&::-webkit-slider-thumb]:border-[#666] [&::-webkit-slider-thumb]:bg-[#f3f4f6]"
      />
      <span className="mr-1 flex"><ZoomButton label="Zoom in" d="M4 8h8M8 4v8" /></span>
    </footer>
  );
};

/* ---------- windows taskbar ---------- */

const TASKS = [
  {
    name: 'Edge', open: false, active: false,
    icon: <svg width="20" height="22" viewBox="0 0 20 22"><path d="M0 10C1 3 6 0 11 0c6 0 9 4 9 10v2H7c0 4 3 6 6 6 2 0 4-.5 6-1.500V20c-2 1.500-5 2-8 2-5 0-9-4-8-9 .5-3 2-5 5-6-4 0-6 1-8 3zm7-1h7c0-3-1-5-3.500-5S7 6 7 9z" fill="#0b78d7" /></svg>,
  },
  {
    name: 'File Explorer', open: true, active: false,
    icon: <svg width="22" height="18" viewBox="0 0 22 18"><path d="M0 0h9l1 2h11v16H0z" fill="#f3cf5c" /><path d="M1 4h20v14H1z" fill="#fde69a" /><path d="M4 18v-6l2-2h10l2 2v6h-4v-4H8v4z" fill="#38b0e4" /></svg>,
  },
  {
    name: 'Store', open: false, active: false,
    icon: <svg width="23" height="23" viewBox="0 0 23 23"><path d="M7.500 6V3.500a3 3 0 0 1 6-1 3 3 0 0 1 3 3" fill="none" stroke="#fff" /><path d="M0 6h23v15l-2 2H2l-2-2z" fill="#fff" /><path d="M6 9h5v5H6z" fill="#f25022" /><path d="M12 9h5v5h-5z" fill="#7fba00" /><path d="M6 15h5v5H6z" fill="#00a4ef" /><path d="M12 15h5v5h-5z" fill="#ffb900" /></svg>,
  },
  {
    name: 'Mail', open: false, active: false,
    icon: <svg width="24" height="20" viewBox="0 0 24 20"><path d="M0 6l12-6 12 6v14H0z" fill="#fff" /><path d="M1 6h22L14 11l5 5-8-4z" fill="#000" /></svg>,
  },
  {
    name: 'Console', open: true, active: false,
    icon: <svg width="21" height="16" viewBox="0 0 21 16"><path d="M0 0h21v16H0z" fill="#e6e8ea" /><path d="M0 0h21v2H0z" fill="#a7abb0" /><path d="M6 4h8v10H6z" fill="#0b78d7" /><path d="M1.500 5h3M1.500 8h3M1.500 11h3M15.500 5h4M15.500 8h4M15.500 11h4" stroke="#888" /></svg>,
  },
  {
    name: 'UiPath', open: true, active: false,
    icon: <span className="flex size-6 items-center justify-center bg-[#0a76c5] text-[18px] leading-6 font-semibold text-white">Ui</span>,
  },
  {
    name: 'Chrome', open: true, active: false,
    icon: <svg width="22" height="22" viewBox="0 0 22 22"><circle cx="11" cy="11" r="11" fill="#fbc91d" /><path d="M1.500 5.500A11 11 0 0 1 20.500 5.500H11L6.200 13.700z" fill="#de4b3c" /><path d="M1.500 5.500A11 11 0 0 0 10 22l5.500-8.500L11 16l-5-2.500z" fill="#1fa05a" /><circle cx="11" cy="11" r="5" fill="#fff" /><circle cx="11" cy="11" r="4" fill="#4688f1" /></svg>,
  },
  {
    name: 'Acrobat', open: true, active: false,
    icon: <svg width="21" height="19" viewBox="0 0 21 19"><path d="M0 0h21v19H0z" fill="#d30b0b" /><path d="M4 15c3-2 6-6 6-11 0-2-2-1-1 1 1 4 4 7 8 6 1-2-9-1-13 4z" fill="none" stroke="#fff" strokeWidth="1.300" /></svg>,
  },
  {
    name: 'Excel', open: true, active: true,
    icon: <svg width="22" height="21" viewBox="0 0 22 21"><rect width="21" height="21" rx="1" fill="#dcefd9" /><path d="M0 0h14v21H0z" fill="#8ecb8a" /><path d="M2 3h4l2 4 3-4h4l-5 7 4 7h-4l-2-4-3 4H1l5-7z" fill="#1c7a31" /><path d="M11 11l9-2 2 8-9 3z" fill="#fff" stroke="#9cb89c" strokeWidth=".5" /><path d="M12 13l8-2M13 15l8-2M13 17l8-2" stroke="#8aa88a" strokeWidth=".7" /></svg>,
  },
];

const Taskbar = () => (
  <div className="flex h-10 shrink-0 items-stretch bg-[linear-gradient(#262626_8px,#000308_8px)] text-white">
    <button aria-label="Start" className="flex w-12 items-center justify-center">
      <svg width="16" height="16" viewBox="0 0 16 16" fill="#fff"><path d="M0 2.300L6.500 1.400v6.200H0zM7.300 1.300L16 0v7.600H7.300zM0 8.400h6.500v6.200L0 13.700zM7.300 8.400H16V16l-8.700-1.300z" /></svg>
    </button>
    <div className="flex w-[344px] items-center bg-[#333]">
      <span className="ml-[9px] size-[22px] rounded-full border-3 border-white" />
      <input type="text" aria-label="Search" placeholder="Type here to search" className="ml-[9px] min-w-0 flex-1 bg-transparent text-[14px] outline-none placeholder:text-[#a3a3a3]" />
      <button aria-label="Voice search" className="mr-[15px]">
        <svg width="11" height="17" fill="none" stroke="#aaa"><path d="M3.500 .5h4v11h-4zM.5 8v5.500h10V8M5.500 13.500v3M3 16.500h5" /></svg>
      </button>
    </div>
    <button aria-label="Task view" className="flex w-[50px] items-center justify-center">
      <svg width="20" height="15" fill="none" stroke="#fff"><path d="M4.500 .5h11v14h-11zM2.500 2.500h-2v10h2M17.500 2.500h2v10h-2" /></svg>
    </button>
    {TASKS.map(t => (
      <button key={t.name} aria-label={t.name} className={`flex w-[49px] flex-col items-center ${t.active ? 'bg-[#454749]' : ''}`}>
        <span className="flex flex-1 items-center">{t.icon}</span>
        <span className={`h-0.5 ${t.active ? 'w-full' : 'w-10'} ${t.open ? 'bg-[#76b9ed]' : ''}`} />
      </button>
    ))}
    <div className="ml-auto flex items-center">
      <button aria-label="Show hidden icons" className="flex w-6 justify-center">
        <svg width="12" height="7" fill="none" stroke="#fff" strokeWidth="1.300"><path d="M.5 6.500L6 1l5.500 5.500" /></svg>
      </button>
      <button aria-label="Battery" className="flex w-6 justify-center">
        <svg width="16" height="12" fill="none" stroke="#fff"><path d="M5.500 3.500h8v7h-9v-3M14.500 5v4" /><path d="M8 5h4v4H8z" fill="#fff" /><path d="M1.500 0v2M4.500 0v2M.5 2.500h5v2h-1l-1 1h-1l-1-1h-1zM3 6v5" /></svg>
      </button>
      <button aria-label="Network" className="flex w-[26px] justify-center">
        <svg width="13" height="13" fill="none" stroke="#888"><path d="M.5 12A12 12 0 0 1 12 1" /><path d="M3.500 12.500A9 9 0 0 1 12 4.500M6.500 12.500A6 6 0 0 1 12 7.500" stroke="#ccc" /><circle cx="10.500" cy="11" r="1.500" fill="#fff" /></svg>
      </button>
      <button aria-label="Volume" className="flex w-5 justify-center">
        <svg width="16" height="13" fill="none" stroke="#fff"><path d="M.5 4.500h2l4-4v12l-4-4h-2zM8.500 4.500q1.500 2 0 4M10.500 2.500q3 4 0 8" /><path d="M12.500 .5q5 6 0 12" stroke="#888" /></svg>
      </button>
      <time className="w-[75px] text-center text-[11px] leading-[18px]">22:57<br />04-08-2019</time>
      <button aria-label="Notifications" className="flex w-9 justify-center">
        <svg width="17" height="17" fill="none" stroke="#fff" strokeWidth="1.200"><path d="M.5 1.500h15v12h-5l-2.500 2.500-2.500-2.500h-5z" /></svg>
      </button>
      <span className="mr-1 ml-2.5 h-10 w-px bg-[#555]" />
    </div>
  </div>
);

const App: React.FC = () => (
  <div className="flex h-screen flex-col overflow-hidden bg-white font-['Open_Sans',sans-serif]">
    <TitleBar />
    <TabRow />
    <Ribbon />
    <main className="flex min-h-0 flex-1 flex-col bg-[#dce0e8]">
      <FormulaBar />
      <div className="flex min-h-0 flex-1 border-t border-[#868b94]">
        <Sheet />
        <VerticalScroll />
      </div>
      <SheetTabs />
    </main>
    <StatusBar />
    <Taskbar />
  </div>
);

export default App;
